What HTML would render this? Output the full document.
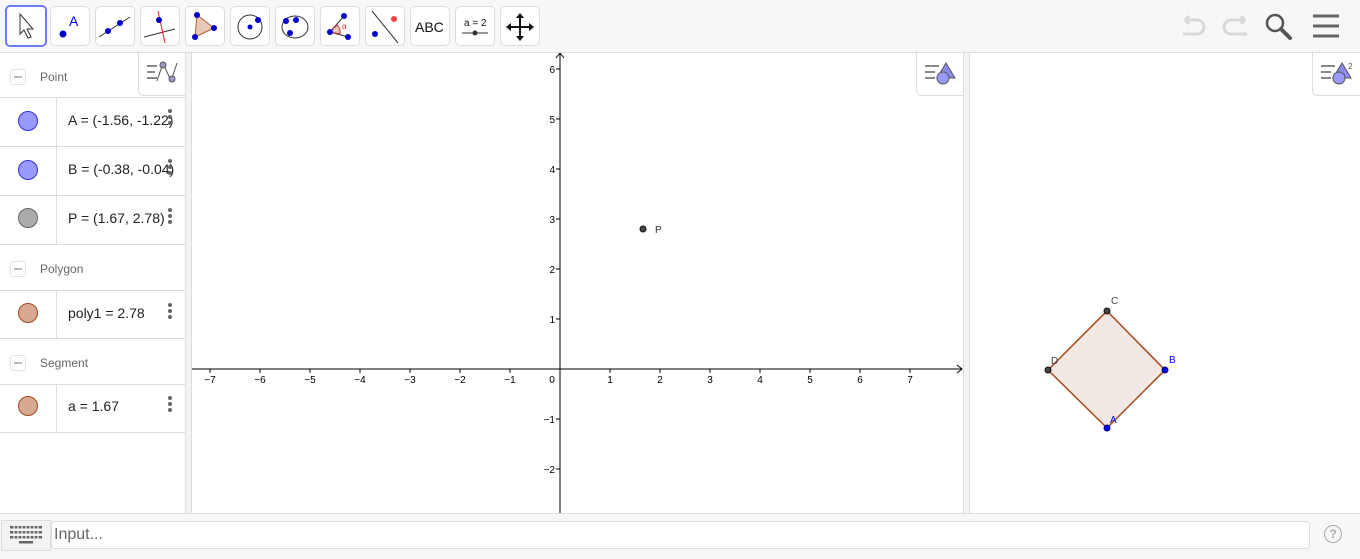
<!DOCTYPE html><html><head><style>
body{margin:0;width:1360px;height:558px;overflow:hidden;font-family:"Liberation Sans",sans-serif;background:#fff;position:relative}
.a{position:absolute}
.tb{left:0;top:0;width:1360px;height:52px;background:#f7f7f7;border-bottom:1px solid #dcdcdc}
.btn{position:absolute;top:6px;width:38px;height:38px;border:1px solid #ddd;border-radius:5px;background:#fff}
.btn svg{position:absolute;left:0;top:0}
.hdr{position:absolute;left:0;width:185px;height:45px;border-bottom:1px solid #ddd;font-size:12px;color:#666}
.hdr span{position:absolute;left:40px;top:17px}
.hdr i{position:absolute;left:10px;top:16px;width:14px;height:14px;border:1px solid #e3e3e3;border-radius:3px}
.hdr i:after{content:"";position:absolute;left:3px;top:6px;width:8px;height:1.5px;background:#bbb}
.row{position:absolute;left:0;width:185px;border-bottom:1px solid #ddd;font-size:14px;color:#222}
.row .c{position:absolute;left:18px;width:18px;height:18px;border-radius:50%}
.row .v{position:absolute;left:56px;top:0;bottom:0;border-left:1px solid #ddd}
.row .t{position:absolute;left:68px}
.dots{position:absolute;left:168px;width:4px}
.dots b{display:block;width:4px;height:4px;border-radius:50%;background:#666;margin-bottom:2px}
</style></head><body>
<div class="a tb"></div>
<div class="btn" style="left:5px;border:2px solid #6e7df5;top:5px;width:38px;height:38px"><svg width="38" height="38"><path d="M13 7 L13 27 L17 23 L21 31 L24 30 L20 22 L26 22 Z" fill="#fff" stroke="#333" stroke-width="1"/></svg></div>
<div class="btn" style="left:50px"><svg width="38" height="38"><circle cx="12" cy="27" r="3.5" fill="#0000cc"/><text x="18" y="19" font-size="14" fill="#0000ff" font-family="Liberation Sans">A</text></svg></div>
<div class="btn" style="left:95px"><svg width="38" height="38"><line x1="3" y1="30" x2="34" y2="10" stroke="#333"/><circle cx="12" cy="24" r="3" fill="#0000cc"/><circle cx="24" cy="16" r="3" fill="#0000cc"/></svg></div>
<div class="btn" style="left:140px"><svg width="38" height="38"><line x1="3" y1="30" x2="34" y2="22" stroke="#333"/><line x1="17" y1="4" x2="24" y2="36" stroke="#e22"/><circle cx="18" cy="13" r="3" fill="#0000cc"/></svg></div>
<div class="btn" style="left:185px"><svg width="38" height="38"><polygon points="11,8 28,21 9,30" fill="#e8c8b8" stroke="#b35a2a"/><circle cx="11" cy="8" r="3" fill="#0000cc"/><circle cx="28" cy="21" r="3" fill="#0000cc"/><circle cx="9" cy="30" r="3" fill="#0000cc"/></svg></div>
<div class="btn" style="left:230px"><svg width="38" height="38"><circle cx="19" cy="20" r="12" fill="none" stroke="#333"/><circle cx="19" cy="20" r="2.5" fill="#0000cc"/><circle cx="27" cy="13" r="3" fill="#0000cc"/></svg></div>
<div class="btn" style="left:275px"><svg width="38" height="38"><ellipse cx="19" cy="20" rx="13" ry="11" fill="none" stroke="#333"/><circle cx="10" cy="14" r="3" fill="#0000cc"/><circle cx="20" cy="13" r="3" fill="#0000cc"/><circle cx="14" cy="26" r="3" fill="#0000cc"/></svg></div>
<div class="btn" style="left:320px"><svg width="38" height="38"><path d="M9 25 L23 9 M9 25 L27 30" stroke="#333" fill="none"/><path d="M9 25 L16 18 A10 10 0 0 1 19 27 Z" fill="#e8c8b8" stroke="#c33"/><text x="21" y="22" font-size="8" fill="#e22">α</text><circle cx="23" cy="9" r="3" fill="#0000cc"/><circle cx="9" cy="25" r="3" fill="#0000cc"/><circle cx="27" cy="30" r="3" fill="#0000cc"/></svg></div>
<div class="btn" style="left:365px"><svg width="38" height="38"><line x1="6" y1="4" x2="32" y2="36" stroke="#333"/><circle cx="9" cy="27" r="3" fill="#0000cc"/><circle cx="28" cy="12" r="3" fill="#e44"/></svg></div>
<div class="btn" style="left:410px"><svg width="38" height="38"><text x="4" y="25" font-size="14" fill="#111" font-family="Liberation Sans">ABC</text></svg></div>
<div class="btn" style="left:455px"><svg width="38" height="38"><text x="8" y="19" font-size="10" fill="#111" font-family="Liberation Sans">a = 2</text><line x1="6" y1="26" x2="32" y2="26" stroke="#333"/><circle cx="19" cy="26" r="2.5" fill="#333"/></svg></div>
<div class="btn" style="left:500px"><svg width="38" height="38"><path d="M19 8 V32 M7 20 H31" stroke="#111" stroke-width="2"/><path d="M19 6 L15 11 H23 Z M19 34 L15 29 H23 Z M5 20 L10 16 V24 Z M33 20 L28 16 V24 Z" fill="#111"/></svg></div>
<svg class="a" style="left:1175px;top:10px" width="185" height="32"><path d="M10 10 H22 A7 7 0 0 1 22 24 H8 M10 10 L14 6 M10 10 L14 14" stroke="#d8d8d8" stroke-width="3" fill="none"/><path d="M70 10 H56 A7 7 0 0 0 56 24 H72 M70 10 L66 6 M70 10 L66 14" stroke="#d8d8d8" stroke-width="3" fill="none"/><circle cx="100" cy="13" r="8" fill="none" stroke="#555" stroke-width="2.5"/><path d="M106 19 L115 28" stroke="#555" stroke-width="4" stroke-linecap="round"/><path d="M138 6 H164 M138 16 H164 M138 26 H164" stroke="#666" stroke-width="3"/></svg>
<div class="a" style="left:185px;top:53px;width:7px;height:460px;background:#f3f3f3;border-left:1px solid #ddd;border-right:1px solid #ddd;box-sizing:border-box"></div>
<div class="a" style="left:963px;top:53px;width:7px;height:460px;background:#f3f3f3;border-left:1px solid #ddd;border-right:1px solid #ddd;box-sizing:border-box"></div>
<div class="hdr" style="top:53px;height:44px"><i></i><span>Point</span></div>
<div class="row" style="top:97px;height:49px"><div class="c" style="top:14px;background:#9999ff;border:1px solid #3333dd"></div><div class="v"></div><div class="t" style="top:15px">A = (-1.56, -1.22)</div><div class="dots" style="top:12px"><b></b><b></b><b></b></div></div>
<div class="row" style="top:147px;height:48px"><div class="c" style="top:13px;background:#9999ff;border:1px solid #3333dd"></div><div class="v"></div><div class="t" style="top:14px">B = (-0.38, -0.04)</div><div class="dots" style="top:12px"><b></b><b></b><b></b></div></div>
<div class="row" style="top:196px;height:48px"><div class="c" style="top:12px;background:#aaa;border:1px solid #666"></div><div class="v"></div><div class="t" style="top:14px">P = (1.67, 2.78)</div><div class="dots" style="top:12px"><b></b><b></b><b></b></div></div>
<div class="hdr" style="top:245px"><i></i><span>Polygon</span></div>
<div class="row" style="top:291px;height:47px"><div class="c" style="top:12px;background:#d9a890;border:1px solid #a04a20"></div><div class="v"></div><div class="t" style="top:14px">poly1 = 2.78</div><div class="dots" style="top:12px"><b></b><b></b><b></b></div></div>
<div class="hdr" style="top:339px"><i></i><span>Segment</span></div>
<div class="row" style="top:385px;height:47px"><div class="c" style="top:11px;background:#d9a890;border:1px solid #a04a20"></div><div class="v"></div><div class="t" style="top:13px">a = 1.67</div><div class="dots" style="top:11px"><b></b><b></b><b></b></div></div>
<div class="a" style="left:138px;top:53px;width:46px;height:42px;background:#fff;border:1px solid #ddd;border-top:none;border-radius:0 0 0 6px"><svg width="46" height="42"><path d="M8 13 H18 M8 19 H16 M8 25 H18" stroke="#888" stroke-width="2"/><path d="M18 28 L24 10 L32 28 L38 10" stroke="#555" fill="none"/><circle cx="24" cy="12" r="3" fill="#99c" stroke="#555"/><circle cx="33" cy="26" r="3" fill="#99c" stroke="#555"/></svg></div>
<svg class="a" style="left:192px;top:53px" width="771" height="460" font-family="Liberation Sans" font-size="10">
<line x1="0" y1="316" x2="770" y2="316" stroke="#000"/><path d="M765 312 L770 316 L765 320" stroke="#000" fill="none"/>
<line x1="368" y1="0" x2="368" y2="460" stroke="#000"/><path d="M364 5 L368 0 L372 5" stroke="#000" fill="none"/>
<g stroke="#000">
<line x1="18" y1="316" x2="18" y2="320"/><line x1="68" y1="316" x2="68" y2="320"/><line x1="118" y1="316" x2="118" y2="320"/><line x1="168" y1="316" x2="168" y2="320"/><line x1="218" y1="316" x2="218" y2="320"/><line x1="268" y1="316" x2="268" y2="320"/><line x1="318" y1="316" x2="318" y2="320"/><line x1="418" y1="316" x2="418" y2="320"/><line x1="468" y1="316" x2="468" y2="320"/><line x1="518" y1="316" x2="518" y2="320"/><line x1="568" y1="316" x2="568" y2="320"/><line x1="618" y1="316" x2="618" y2="320"/><line x1="668" y1="316" x2="668" y2="320"/><line x1="718" y1="316" x2="718" y2="320"/>
<line x1="364" y1="16" x2="368" y2="16"/><line x1="364" y1="66" x2="368" y2="66"/><line x1="364" y1="116" x2="368" y2="116"/><line x1="364" y1="166" x2="368" y2="166"/><line x1="364" y1="216" x2="368" y2="216"/><line x1="364" y1="266" x2="368" y2="266"/><line x1="364" y1="366" x2="368" y2="366"/><line x1="364" y1="416" x2="368" y2="416"/></g>
<g text-anchor="middle"><text x="18" y="330">−7</text><text x="68" y="330">−6</text><text x="118" y="330">−5</text><text x="168" y="330">−4</text><text x="218" y="330">−3</text><text x="268" y="330">−2</text><text x="318" y="330">−1</text><text x="360" y="330">0</text><text x="418" y="330">1</text><text x="468" y="330">2</text><text x="518" y="330">3</text><text x="568" y="330">4</text><text x="618" y="330">5</text><text x="668" y="330">6</text><text x="718" y="330">7</text></g>
<g text-anchor="end"><text x="363" y="20">6</text><text x="363" y="70">5</text><text x="363" y="120">4</text><text x="363" y="170">3</text><text x="363" y="220">2</text><text x="363" y="270">1</text><text x="363" y="370">−1</text><text x="363" y="420">−2</text></g>
<circle cx="451" cy="176" r="3" fill="#444" stroke="#111"/><text x="463" y="180" fill="#333">P</text>
</svg>
<div class="a" style="left:916px;top:53px;width:46px;height:42px;background:#fff;border:1px solid #ddd;border-top:none;border-radius:0 0 0 6px"><svg width="46" height="42"><path d="M8 13 H22 M8 19 H18 M8 25 H18" stroke="#888" stroke-width="2"/><polygon points="29,10 38,25 20,25" fill="#8c8cf0" stroke="#555"/><circle cx="26" cy="25" r="6" fill="#9999ff" stroke="#555"/></svg></div>
<svg class="a" style="left:970px;top:53px" width="390" height="460" font-family="Liberation Sans" font-size="10">
<polygon points="137,258 195,317 137,375 78,317" fill="#f2e8e3" stroke="#a8481a" stroke-width="1.5"/>
<circle cx="137" cy="258" r="3" fill="#444" stroke="#111"/><circle cx="78" cy="317" r="3" fill="#444" stroke="#111"/>
<circle cx="195" cy="317" r="3" fill="#0000ee" stroke="#000088"/><circle cx="137" cy="375" r="3" fill="#0000ee" stroke="#000088"/>
<text x="141" y="251" fill="#444">C</text><text x="81" y="311" fill="#444">D</text><text x="199" y="310" fill="#0000ee">B</text><text x="140" y="370" fill="#0000ee">A</text>
</svg>
<div class="a" style="left:1312px;top:53px;width:47px;height:42px;background:#fff;border:1px solid #ddd;border-top:none;border-right:none;border-radius:0 0 0 6px"><svg width="46" height="42"><path d="M8 13 H22 M8 19 H18 M8 25 H18" stroke="#888" stroke-width="2"/><polygon points="29,10 38,25 20,25" fill="#8c8cf0" stroke="#555"/><circle cx="26" cy="25" r="6" fill="#9999ff" stroke="#555"/><text x="35" y="16" font-size="8" fill="#555">2</text></svg></div>
<div class="a" style="left:0;top:513px;width:1360px;height:45px;background:#f7f7f7;border-top:1px solid #ddd"></div>
<div class="a" style="left:1px;top:520px;width:48px;height:29px;background:#f3f3f3;border:1px solid #ddd"><svg width="48" height="29"><g fill="#666"><rect x="8" y="5" width="32" height="2.5"/><rect x="8" y="10" width="32" height="2.5"/><rect x="8" y="15" width="32" height="2.5"/><rect x="17" y="20" width="14" height="2.5"/></g><g stroke="#f3f3f3" stroke-width="1.2"><path d="M12 4 V18 M16 4 V18 M20 4 V18 M24 4 V18 M28 4 V18 M32 4 V18 M36 4 V18"/></g></svg></div>
<div class="a" style="left:51px;top:521px;width:1255px;height:26px;background:#fff;border:1px solid #ddd;border-radius:4px;font-size:16px;color:#666;line-height:26px;padding-left:2px">Input...</div>
<div class="a" style="left:1324px;top:525px;width:16px;height:16px;border:1.5px solid #aaa;border-radius:50%;color:#aaa;font-size:12px;text-align:center;line-height:16px;font-weight:bold">?</div>
</body></html>
